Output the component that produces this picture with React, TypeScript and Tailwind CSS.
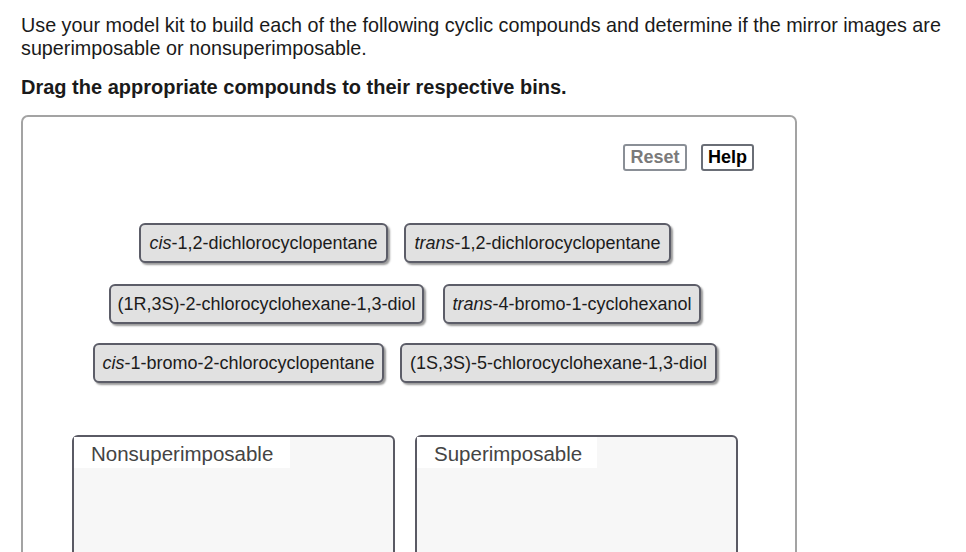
const ROWS = [
  {
    gap: "gap-[16px]",
    mt: "mt-[52px]",
    chips: [
      { pre: "cis", text: "-1,2-dichlorocyclopentane", w: "w-[249px]" },
      { pre: "trans", text: "-1,2-dichlorocyclopentane", w: "w-[267px]" },
    ],
  },
  {
    gap: "gap-[19px]",
    mt: "mt-[21px]",
    chips: [
      { pre: "", text: "(1R,3S)-2-chlorocyclohexane-1,3-diol", w: "w-[315px]" },
      { pre: "trans", text: "-4-bromo-1-cyclohexanol", w: "w-[258px]" },
    ],
  },
  {
    gap: "gap-[16px]",
    mt: "mt-[19px]",
    chips: [
      { pre: "cis", text: "-1-bromo-2-chlorocyclopentane", w: "w-[291px]" },
      { pre: "", text: "(1S,3S)-5-chlorocyclohexane-1,3-diol", w: "w-[317px]" },
    ],
  },
];

function Chip({ pre, text, w }: { pre: string; text: string; w: string }) {
  return (
    <div
      className={`${w} h-[40px] flex items-center justify-center rounded-[6px] border-2 border-[#5c5d68] bg-[#e1e1e1] text-[18px] text-[#1c1c1c] shadow-[2px_2px_2px_rgba(0,0,0,0.4)] whitespace-nowrap`}
    >
      {pre && <i>{pre}</i>}
      {text}
    </div>
  );
}

function Bin({ label, labelW }: { label: string; labelW: string }) {
  return (
    <div className="w-[323px] h-[140px] rounded-[6px] border-2 border-[#5a5a64] bg-[#f7f7f7]">
      <div className={`${labelW} h-[31px] bg-white pl-[17px] pt-[3px] flex items-center text-[20.5px] text-[#444]`}>
        {label}
      </div>
    </div>
  );
}

export default function App() {
  return (
    <div
      className="w-[966px] h-[552px] overflow-hidden bg-white pl-[21px] pt-[14px] text-[#1a1a1a]"
      style={{ fontFamily: '"Liberation Sans", Arial, sans-serif' }}
    >
      <p className="text-[19.75px] leading-[23px] w-[935px]">
        Use your model kit to build each of the following cyclic compounds and determine if the mirror images are
        superimposable or nonsuperimposable.
      </p>
      <p className="mt-[16px] text-[20px] leading-[23px] font-bold">
        Drag the appropriate compounds to their respective bins.
      </p>

      <div className="mt-[16px] w-[776px] h-[500px] rounded-[7px] border-2 border-[#a3a3a3]">
        {/* buttons */}
        <div className="flex justify-end gap-[14px] pr-[41px] mt-[27px]">
          <button className="w-[64px] h-[27px] rounded-[3px] border-2 border-[#8a8f96] text-[18px] font-bold text-[#7a7a7a] flex items-center justify-center">
            Reset
          </button>
          <button className="w-[53px] h-[27px] rounded-[3px] border-2 border-[#6a6e76] text-[18px] font-bold text-black flex items-center justify-center">
            Help
          </button>
        </div>

        {/* compounds */}
        <div className="pr-[8px]">
          {ROWS.map((row, i) => (
            <div key={i} className={`flex justify-center ${row.gap} ${row.mt}`}>
              {row.chips.map((c, j) => (
                <Chip key={j} {...c} />
              ))}
            </div>
          ))}
        </div>

        {/* bins */}
        <div className="flex gap-[20px] pl-[49px] mt-[52px]">
          <Bin label="Nonsuperimposable" labelW="w-[216px]" />
          <Bin label="Superimposable" labelW="w-[180px]" />
        </div>
      </div>
    </div>
  );
}
